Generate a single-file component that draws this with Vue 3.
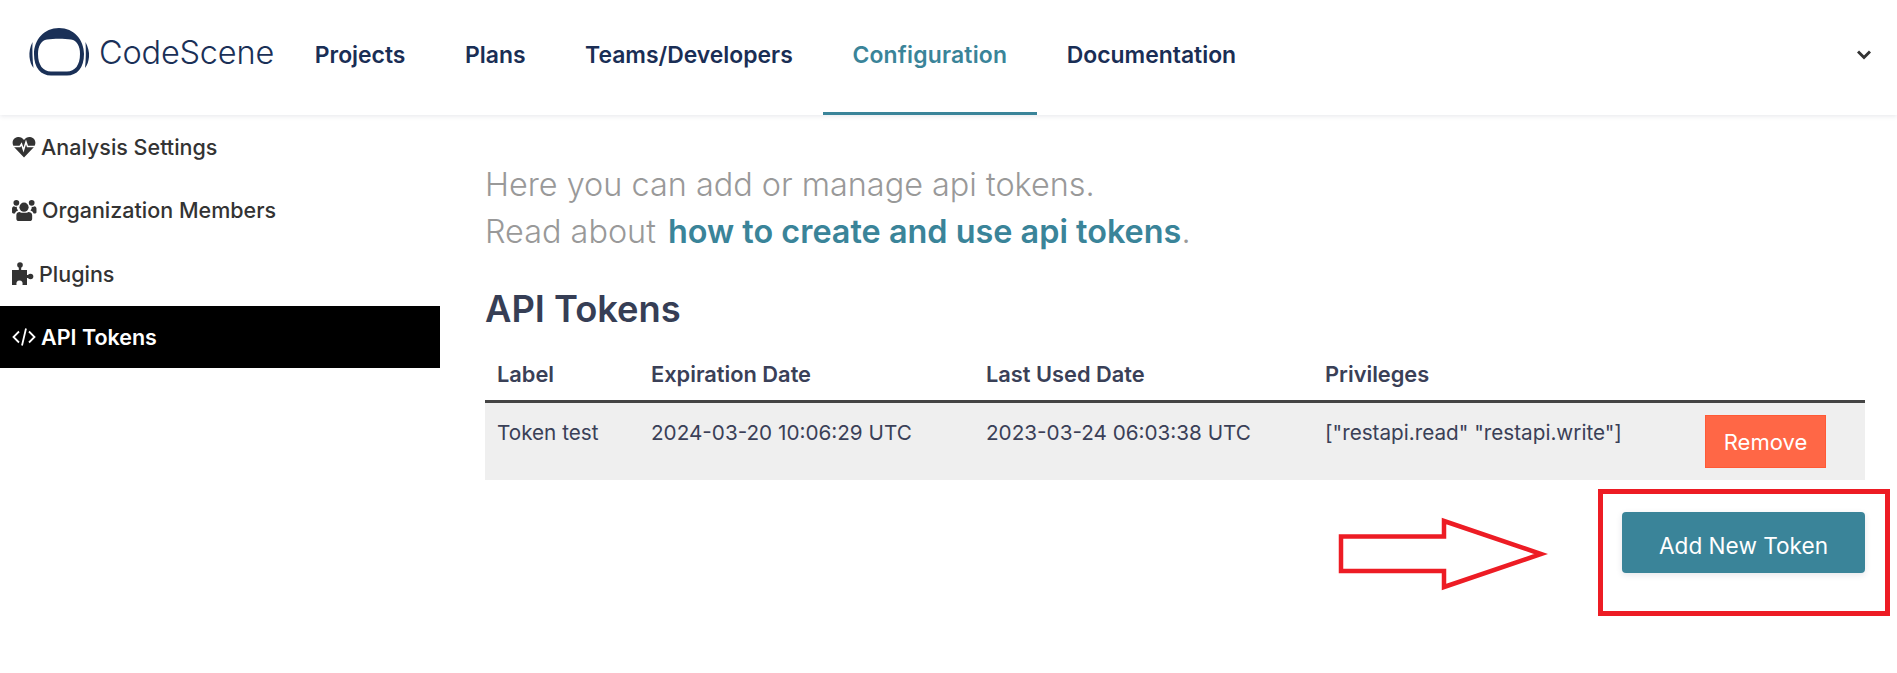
<script setup>
const navItems = ['Projects', 'Plans', 'Teams/Developers', 'Configuration', 'Documentation']
const tokens = [
  { label: 'Token test', expires: '2024-03-20 10:06:29 UTC', used: '2023-03-24 06:03:38 UTC', privileges: '["restapi.read" "restapi.write"]' }
]
</script>

<template>
  <div class="page">
    <header class="topbar">
      <div class="brand">
        <svg class="logo" viewBox="0 0 62 48" width="62" height="48">
          <path fill="#1a3057" fill-rule="evenodd" d="M30 0C45 0 55 12 55 26C55 40 48 47.500 38 47.500L22 47.500C12 47.500 5 40 5 26C5 12 15 0 30 0ZM18 11.500C12 12.500 9 18 9 26C9 37 14 43.500 22 43.500L38 43.500C46 43.500 51 37 51 26C51 18 48 12.500 42 11.500C35 10.500 25 10.500 18 11.500Z"/>
          <path fill="#1a3057" d="M3.500 14C1 19 0 24 .5 29C1 33 2 37 4.500 40C3.500 32 3.200 22 3.500 14Z"/>
          <path fill="#1a3057" d="M56.500 14C59 19 60.500 24 60 29C59.500 33 58.500 37 56 40C57 32 57 22 56.500 14Z"/>
        </svg>
        <span class="brand-name">CodeScene</span>
      </div>
      <nav class="nav">
        <a v-for="item in navItems" :key="item" class="nav-item" :class="{ active: item === 'Configuration' }">{{ item }}</a>
      </nav>
      <svg class="chevron" viewBox="0 0 14 10" width="14" height="10">
        <path d="M1 1.500l6 6 6-6" fill="none" stroke="#333" stroke-width="3"/>
      </svg>
    </header>

    <div class="layout">
      <aside class="sidebar">
        <a class="side-item">
          <svg class="side-icon" viewBox="0 0 24 22" width="24" height="22">
            <path fill="#333" d="M12 21.500L2.500 11.500C-1 7.500.5 1.500 6 1c2.500-.2 4.500 1 6 3 1.500-2 3.500-3.200 6-3 5.500.5 7 6.500 3.500 10.500z"/>
            <path fill="none" stroke="#fff" stroke-width="1.500" d="M1 10.500h7l1.500-2.500 2 6 2.500-8 1.500 4.500h8"/>
          </svg>
          Analysis Settings
        </a>
        <a class="side-item">
          <svg class="side-icon" viewBox="0 0 26 24" width="25" height="23">
            <g fill="#333">
              <circle cx="12.500" cy="8.500" r="4.800"/>
              <circle cx="4.500" cy="4" r="3"/>
              <circle cx="20.500" cy="4" r="3"/>
              <path d="M4.500 17c0-2.500 1.500-3.500 3.500-3.500 2 1.200 7 1.200 9 0 2 0 4 1 4 3.500v3.500c0 1.500-1 2.500-2.500 2.500h-11.500c-1.500 0-2.500-1-2.500-2.500z"/>
              <path d="M0 10C0 8.500 1 7.500 2 7.500c1 .8 2 1 3 .7-.2 1.500.2 2.800 1.300 3.800C4.800 12.500 3.500 13.500 3 15H1.200C.5 15 0 14.500 0 13.500z"/>
              <path d="M25.500 10c0-1.500-1-2.500-2-2.500-1 .8-2 1-3 .7.200 1.500-.2 2.800-1.300 3.800 1.500.5 2.800 1.500 3.300 3h1.800c.7 0 1.200-.5 1.200-1.500z"/>
            </g>
          </svg>
          Organization Members
        </a>
        <a class="side-item">
          <svg class="side-icon" viewBox="0 0 22 24" width="22" height="24">
            <g fill="#333">
              <circle cx="8" cy="3" r="2.800"/>
              <path d="M6.800 4h2.400v4h5.800v5h3v3h-3v7H10.500c.5-3-.5-4.500-3-4.500s-3.500 1.500-3 4.500H0V8h6.800z"/>
              <circle cx="18.500" cy="14.500" r="2.800"/>
            </g>
          </svg>
          Plugins
        </a>
        <a class="side-item current">
          <svg class="side-icon" viewBox="0 0 24 20" width="24" height="20">
            <path fill="none" stroke="#fff" stroke-width="1.800" d="M7 4.500L1.500 10 7 15.500M17 4.500l5.500 5.500-5.500 5.500M14 1.500L10 18.500"/>
          </svg>
          API Tokens
        </a>
      </aside>

      <main class="content">
        <p class="intro">
          Here you can add or manage api tokens.<br>
          Read about <a class="intro-link">how to create and use api tokens</a>.
        </p>
        <h2 class="title">API Tokens</h2>
        <table class="tokens">
          <thead>
            <tr>
              <th class="col-label">Label</th>
              <th class="col-date">Expiration Date</th>
              <th class="col-used">Last Used Date</th>
              <th class="col-priv">Privileges</th>
              <th></th>
            </tr>
          </thead>
          <tbody>
            <tr v-for="t in tokens" :key="t.label">
              <td>{{ t.label }}</td>
              <td>{{ t.expires }}</td>
              <td>{{ t.used }}</td>
              <td>{{ t.privileges }}</td>
              <td><button class="btn-remove">Remove</button></td>
            </tr>
          </tbody>
        </table>
        <div class="actions">
          <button class="btn-add">Add New Token</button>
        </div>
      </main>
    </div>

    <!-- screenshot annotation on top of the page -->
    <svg class="mark" viewBox="0 0 1897 673" width="1897" height="673">
      <rect x="1600.500" y="491.500" width="287" height="122" fill="none" stroke="#ed1c24" stroke-width="5"/>
      <path d="M1341 536.500H1444V521L1541 554 1444 587V571H1341Z" fill="#fff" stroke="#ed1c24" stroke-width="4.500"/>
    </svg>
  </div>
</template>

<style scoped>
* { box-sizing: border-box; }

.page {
  position: relative; width: 1897px; height: 673px; overflow: hidden;
  background: #fff; font-family: Inter, "Noto Sans", sans-serif; color: #333;
}

.topbar {
  height: 115px; display: flex; align-items: stretch; padding-left: 29px;
  background: #fff; box-shadow: 0 1px 5px rgba(40, 50, 80, 0.12);
  position: relative; z-index: 1;
}
.brand { display: flex; align-items: center; width: 256px; padding-bottom: 10px; }
.logo { display: block; margin-top: -2px; }
.brand-name { margin-left: 8px; font-size: 32.500px; font-weight: 300; color: #1a3057; letter-spacing: -0.2px; }

.nav { display: flex; }
.nav-item {
  display: flex; align-items: center; padding: 0 29.800px 3px; border-bottom: 3px solid transparent;
  font-size: 22.900px; font-weight: 600; color: #1a2e55;
}
.nav-item.active { color: #3a8499; border-bottom-color: #3a8499; letter-spacing: 0.2px; }
.chevron { position: absolute; right: 26px; top: 50px; }

.layout { display: flex; }
.sidebar { width: 440px; flex: none; display: flex; flex-direction: column; }
.side-item {
  height: 63.500px; display: flex; align-items: center; padding-left: 12px; gap: 5px;
  font-size: 21.500px; font-weight: 500; color: #333;
}
.side-item.current { background: #000; color: #fff; height: 62px; padding-top: 1px; font-weight: 600; }
.side-icon { flex: none; }

.content { flex: 1; margin-left: 45px; margin-right: 32px; padding-top: 46px; }
.intro { margin: 0; font-size: 32.400px; line-height: 47px; font-weight: 300; color: #999; }
.intro-link { margin-left: 3px; font-weight: 600; color: #3a8499; }
.title { margin: 31px 0 12px; font-size: 36.300px; line-height: 46px; font-weight: 600; color: #363e55; }

.tokens { width: 100%; border-collapse: collapse; table-layout: fixed; color: #3a4057; }
.tokens th {
  padding: 13px 12px 9px; text-align: left; font-size: 21.800px; line-height: 34px; font-weight: 600;
  border-bottom: 3px solid #444;
}
.tokens td { padding: 12px; font-size: 20.700px; line-height: 36px; vertical-align: top; background: #efefef; }
.col-label { width: 154px; }
.col-date { width: 335px; }
.col-used { width: 339px; }
.col-priv { width: 380px; }

.btn-remove {
  display: block; width: 121px; height: 53px; background: #ff6746; border: 1px solid #ff5a36;
  color: #fff; font-family: inherit; font-size: 22px; padding: 0;
}
.actions { display: flex; justify-content: flex-end; margin-top: 32px; }
.btn-add {
  width: 243px; height: 61px; padding: 5px 0 0; background: #3a8499; border: 0; border-radius: 4px; color: #fff;
  font-family: inherit; font-size: 22.600px; box-shadow: 0 2px 6px rgba(40, 50, 80, 0.12);
}

.mark { position: absolute; left: 0; top: 0; pointer-events: none; z-index: 2; }
</style>
